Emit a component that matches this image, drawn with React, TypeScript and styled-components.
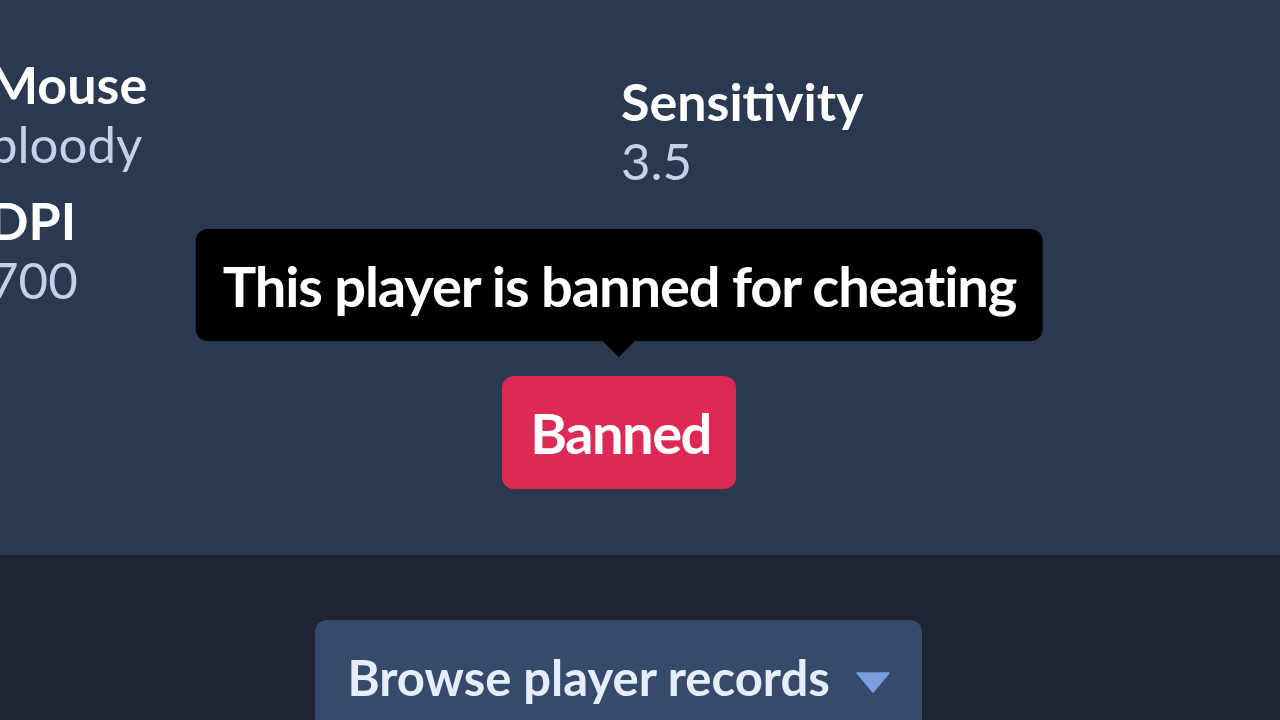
import React from 'react'
import styled, { createGlobalStyle } from 'styled-components'

const GlobalStyle = createGlobalStyle`
  html, body {
    margin: 0;
    padding: 0;
    background: #1e2434;
    font-family: Lato, 'Liberation Sans', sans-serif;
  }
  * {
    box-sizing: border-box;
  }
`

const Page = styled.div`
  width: 1280px;
  height: 720px;
  overflow: hidden;
  background: #1e2434;
`

const ProfilePanel = styled.section`
  height: 555px;
  background: #2a3850;
  padding-top: 54px;
`

const Inner = styled.div`
  margin-left: -11px;
  width: 1260px;
  display: flex;
  flex-direction: column;
  align-items: center;
`

const SpecsGrid = styled.div`
  width: 100%;
  display: grid;
  grid-template-columns: 1fr 1fr;
`

const SpecColumn = styled.div<{ $offset?: number; $indent?: number }>`
  display: flex;
  flex-direction: column;
  gap: 16px;
  padding-top: ${({ $offset }) => $offset || 0}px;
  padding-left: ${({ $indent }) => $indent || 0}px;
`

const Spec = styled.div`
  display: flex;
  flex-direction: column;
`

const SpecLabel = styled.span`
  font-size: 52px;
  line-height: 60px;
  font-weight: 700;
  color: #ffffff;
`

const SpecValue = styled.span`
  font-size: 51px;
  line-height: 60px;
  font-weight: 400;
  color: #c3d2ea;
`

const BadgeWrap = styled.div`
  position: relative;
  margin-top: 66px;
`

const Badge = styled.div`
  height: 113px;
  padding: 0 25px 0 28px;
  display: flex;
  align-items: center;
  border-radius: 12px;
  background: #dc2a55;
  color: #ffffff;
  font-size: 56px;
  font-weight: 700;
  letter-spacing: -1.5px;
`

const Tooltip = styled.div`
  position: absolute;
  left: 50%;
  bottom: calc(100% + 35px);
  transform: translateX(-50%);
  height: 112px;
  padding: 0 26px 0 27px;
  display: flex;
  align-items: center;
  white-space: nowrap;
  border-radius: 12px;
  background: #000000;
  color: #ffffff;
  font-size: 56px;
  font-weight: 700;
  letter-spacing: -1.1px;
  &:after {
    content: '';
    position: absolute;
    top: 100%;
    left: 50%;
    transform: translateX(-50%);
    border-left: 16px solid transparent;
    border-right: 16px solid transparent;
    border-top: 16px solid #000000;
  }
`

const Footer = styled.section`
  padding-top: 65px;
`

const FooterInner = styled.div`
  margin-left: -12px;
  width: 1260px;
  display: flex;
  justify-content: center;
`

const BrowseButton = styled.button`
  width: 607px;
  height: 140px;
  padding: 28px 32px 0 33px;
  display: flex;
  align-items: flex-start;
  justify-content: space-between;
  border: 0;
  border-radius: 12px;
  background: #364a6b;
  color: #e6eefa;
  font-family: inherit;
  font-size: 49px;
  font-weight: 700;
  letter-spacing: 0px;
  cursor: pointer;
`

const Caret = styled.svg`
  margin-top: 24px;
`

const specsLeft = [
  { label: 'Mouse', value: 'bloody' },
  { label: 'DPI', value: '700' },
]

const specsRight = [{ label: 'Sensitivity', value: '3.5' }]

export default function App() {
  return (
    <Page>
      <GlobalStyle />
      <ProfilePanel>
        <Inner>
          <SpecsGrid>
            <SpecColumn>
              {specsLeft.map((s) => (
                <Spec key={s.label}>
                  <SpecLabel>{s.label}</SpecLabel>
                  <SpecValue>{s.value}</SpecValue>
                </Spec>
              ))}
            </SpecColumn>
            <SpecColumn $offset={17} $indent={2}>
              {specsRight.map((s) => (
                <Spec key={s.label}>
                  <SpecLabel>{s.label}</SpecLabel>
                  <SpecValue>{s.value}</SpecValue>
                </Spec>
              ))}
            </SpecColumn>
          </SpecsGrid>
          <BadgeWrap>
            <Tooltip>This player is banned for cheating</Tooltip>
            <Badge>Banned</Badge>
          </BadgeWrap>
        </Inner>
      </ProfilePanel>
      <Footer>
        <FooterInner>
          <BrowseButton>
            <span>Browse player records</span>
            <Caret width="34" height="21" viewBox="0 0 34 21">
              <path d="M1 1 H33 L17 20 Z" fill="#7a9ee0" strokeLinejoin="round" stroke="#7a9ee0" strokeWidth="1.5" />
            </Caret>
          </BrowseButton>
        </FooterInner>
      </Footer>
    </Page>
  )
}
